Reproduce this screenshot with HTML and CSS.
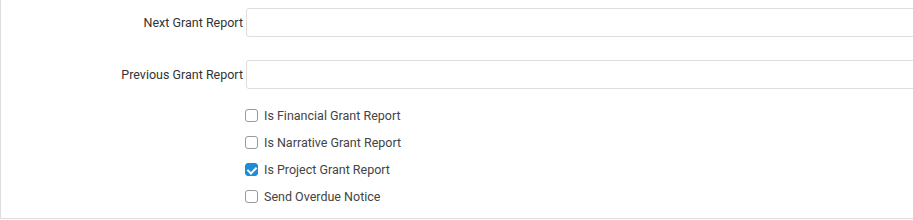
FILE: index.html
```html
<!DOCTYPE html>
<html lang="en">
<head>
    <meta charset="UTF-8">
    <title>Grant Report</title>
    <link rel="stylesheet" href="styles.css">
</head>
<body>
    <div class="panel">
        <div class="form-row">
            <label for="nextReport">Next Grant Report</label>
            <input type="text" id="nextReport">
        </div>
        <div class="form-row">
            <label for="prevReport">Previous Grant Report</label>
            <input type="text" id="prevReport">
        </div>

        <div class="checks">
            <label class="check"><input type="checkbox"> Is Financial Grant Report</label>
            <label class="check"><input type="checkbox"> Is Narrative Grant Report</label>
            <label class="check"><input type="checkbox" checked> Is Project Grant Report</label>
            <label class="check"><input type="checkbox"> Send Overdue Notice</label>
        </div>
    </div>
</body>
</html>
```

FILE: styles.css
```css
* {
    margin: 0;
    padding: 0;
    box-sizing: border-box;
}

body {
    font-family: Roboto, 'Liberation Sans', Arial, sans-serif;
    font-size: 12.5px;
    color: #333;
    background: #fff;
    overflow: hidden;
}

.panel {
    width: 960px;
    padding: 8px 0 8px;
    border: 1px solid #ddd;
    border-top: none;
}

.form-row {
    display: grid;
    grid-template-columns: 245px 1fr;
    align-items: center;
    margin-bottom: 23px;
}

.form-row label {
    text-align: right;
    padding-right: 3px;
}

.form-row input {
    height: 29px;
    border: 1px solid #ddd;
    border-radius: 3px;
    padding: 0 8px;
    font: inherit;
}

.checks {
    margin-top: -10px;
    padding-left: 244px;
}

.check {
    display: flex;
    align-items: center;
    height: 27px;
    color: #444;
}

.check input {
    appearance: none;
    -webkit-appearance: none;
    position: relative;
    width: 13px;
    height: 13px;
    margin: 0 6px 0 0;
    border: 1px solid #999;
    border-radius: 3px;
    background: #fff;
}

.check input:checked {
    background: #1a8cd8;
    border-color: #1a8cd8;
}

.check input:checked::after {
    content: '';
    position: absolute;
    left: 3px;
    top: 1px;
    width: 4px;
    height: 7px;
    border: solid #fff;
    border-width: 0 2px 2px 0;
    transform: rotate(45deg);
}
```
